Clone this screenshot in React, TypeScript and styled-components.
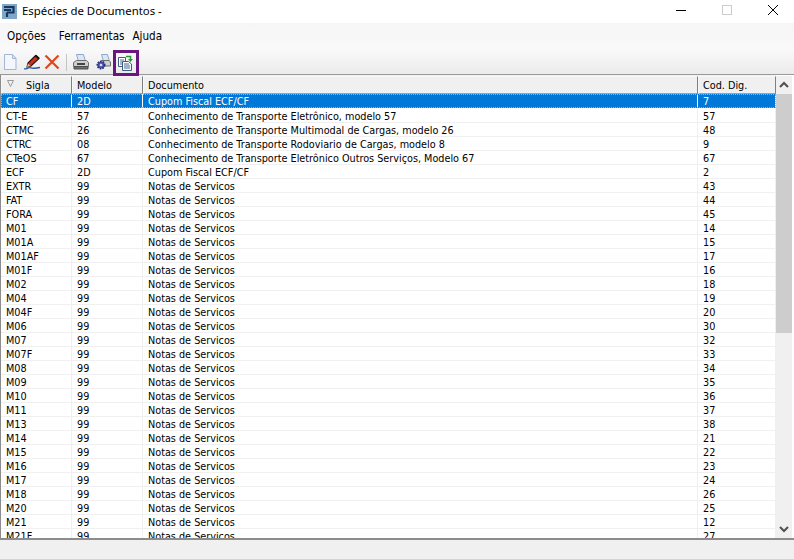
import React from "react";
import styled, { createGlobalStyle } from "styled-components";

const Global = createGlobalStyle`
  html, body { margin: 0; padding: 0; background: #fff; overflow: hidden; }
  * { box-sizing: border-box; }
`;

const Windowed = styled.div`
  width: 794px; height: 559px; display: flex; flex-direction: column; overflow: hidden;
  font-family: "DejaVu Sans Condensed", "DejaVu Sans", sans-serif; font-size: 10.75px; color: #000; background: #fff;
`;
const TitleBar = styled.div`
  height: 23px; flex: none; display: flex; align-items: center; background: #fff; padding-left: 2px;
`;
const AppLogo = styled.svg`width: 15px; height: 15px; flex: none;`;
const TitleText = styled.div`
  margin: -2px 0 0 5px; font-family: "Noto Sans", sans-serif; font-size: 11.4px; flex: 1;
`;
const WinButton = styled.svg<{ $mr?: number }>`width: 46px; height: 23px; flex: none; margin-right: ${p => p.$mr ?? 0}px;`;
const MenuBar = styled.div`
  height: 27px; flex: none; display: flex; align-items: center; padding: 0 0 2px 7px;
  background: linear-gradient(#f6f6f6, #f9f9f9); font-size: 11.6px;
`;
const MenuItem = styled.span<{ $ml?: number }>`margin-left: ${p => p.$ml ?? 0}px;`;
const ToolBar = styled.div`
  height: 25px; flex: none; display: flex; align-items: flex-start; padding-left: 4px;
  background: linear-gradient(#f9f9f9, #ebebeb); border-bottom: 1px solid #9a9a9a;
`;
const ToolIcon = styled.svg<{ $ml?: number }>`
  width: 16px; height: 16px; flex: none; margin-top: 4px; margin-left: ${p => p.$ml ?? 0}px;
`;
const Sep = styled.div`width: 1px; height: 17px; background: #c4c4c4; margin: 4px 0 0 6px;`;
const Highlight = styled.div`
  width: 26px; height: 26px; flex: none; border: 3px solid #6b1580; margin-left: 2px;
  display: flex; align-items: center; justify-content: center; position: relative; z-index: 1;
`;
const HiIcon = styled.svg`width: 16px; height: 16px;`;
const GridArea = styled.div`
  flex: 1; min-height: 0; display: flex; overflow: hidden; border-left: 1px solid #8c8c8c;
`;
const Table = styled.div`flex: none; width: 775px; overflow: hidden;`;
const Columns = "71px 71px 555px 78px";
const HeaderRow = styled.div`
  display: grid; grid-template-columns: ${Columns}; height: 19px; background: #f0f0f0; padding-top: 1px;
`;
const HeaderCell = styled.div<{ $pl?: number }>`
  display: flex; align-items: center; padding: 2px 0 0 ${p => p.$pl ?? 4}px;
  border: 1px solid; border-color: #f8f8f8 #7f7f7f #a0a0a0 #f8f8f8; line-height: 14px; position: relative;
`;
const SortMark = styled.svg`position: absolute; left: 5px; top: 3px; width: 7px; height: 7px;`;
const Row = styled.div<{ $sel?: boolean }>`
  display: grid; grid-template-columns: ${Columns}; height: 14px; line-height: 13px;
  margin-bottom: ${p => (p.$sel ? 1 : 0)}px;
  background: ${p => (p.$sel ? "#0078d7" : "#fff")}; color: ${p => (p.$sel ? "#fff" : "#000")};
  ${p => (p.$sel ? "outline: 1px dotted #e8a040; outline-offset: -1px;" : "")}
`;
const Cell = styled.div<{ $sel?: boolean }>`
  padding: 1px 0 0 5px; white-space: nowrap; overflow: hidden;
  border-right: 1px solid ${p => (p.$sel ? "#fff" : "#f0f0f0")};
  border-bottom: 1px solid ${p => (p.$sel ? "transparent" : "#f0f0f0")};
`;
const ScrollBar = styled.div`
  width: 16px; flex: none; background: #f0f0f0; display: flex; flex-direction: column; margin: 1px 0 0 0;
`;
const ScrollBtn = styled.svg`width: 16px; height: 18px; flex: none;`;
const Thumb = styled.div`height: 239px; flex: none; background: #cdcdcd;`;
const Spacer = styled.div`flex: 1;`;
const StatusBar = styled.div`
  height: 21px; flex: none; background: #f0f0f0; border-top: 2px solid #8c8c8c;
`;

const rows: [string, string, string, string][] = [
  ["CF", "2D", "Cupom Fiscal ECF/CF", "7"],
  ["CT-E", "57", "Conhecimento de Transporte Eletrônico, modelo 57", "57"],
  ["CTMC", "26", "Conhecimento de Transporte Multimodal de Cargas, modelo 26", "48"],
  ["CTRC", "08", "Conhecimento de Transporte Rodoviario de Cargas, modelo 8", "9"],
  ["CTeOS", "67", "Conhecimento de Transporte Eletrônico Outros Serviços, Modelo 67", "67"],
  ["ECF", "2D", "Cupom Fiscal ECF/CF", "2"],
  ...([
    ["EXTR", "43"], ["FAT", "44"], ["FORA", "45"], ["M01", "14"], ["M01A", "15"], ["M01AF", "17"],
    ["M01F", "16"], ["M02", "18"], ["M04", "19"], ["M04F", "20"], ["M06", "30"], ["M07", "32"],
    ["M07F", "33"], ["M08", "34"], ["M09", "35"], ["M10", "36"], ["M11", "37"], ["M13", "38"],
    ["M14", "21"], ["M15", "22"], ["M16", "23"], ["M17", "24"], ["M18", "26"], ["M20", "25"],
    ["M21", "12"], ["M21F", "27"],
  ].map(([a, b]) => [a, "99", "Notas de Servicos", b] as [string, string, string, string])),
];

export default function App() {
  return (
    <Windowed>
      <Global />
      <TitleBar>
        <AppLogo viewBox="0 0 15 15">
          <rect width="15" height="15" fill="#7fa7c9" />
          <path d="M2 3h9.5v5.5H5M2 6h7M5 8.5V13" fill="none" stroke="#17375e" strokeWidth="2.2" />
        </AppLogo>
        <TitleText>Espécies de Documentos -</TitleText>
        <WinButton viewBox="0 0 46 23"><path d="M18 10.5h10" stroke="#000" /></WinButton>
        <WinButton viewBox="0 0 46 23"><rect x="18.5" y="5.5" width="9" height="9" fill="none" stroke="#ccc" /></WinButton>
        <WinButton viewBox="0 0 46 23" $mr={-2}><path d="M18 5l10 10M28 5L18 15" stroke="#000" fill="none" /></WinButton>
      </TitleBar>
      <MenuBar>
        <MenuItem>Opções</MenuItem>
        <MenuItem $ml={13}>Ferramentas</MenuItem>
        <MenuItem $ml={8}>Ajuda</MenuItem>
      </MenuBar>
      <ToolBar>
        <ToolIcon viewBox="0 0 16 16">
          <path d="M.5.5h8l3.5 3.5v11.5H.5z" fill="#f3f6fc" stroke="#a3b6d4" />
          <path d="M8.5.8v3.7H12" fill="#d5dfef" stroke="#a3b6d4" />
        </ToolIcon>
        <ToolIcon viewBox="0 0 16 16" $ml={4}>
          <path d="M4 9L11.5 1.5l3.5 3L7 12l-4 1z" fill="#c9301f" stroke="#2a0f0c" strokeWidth="1.1" />
          <path d="M11.5 1.5l3.5 3" stroke="#111" strokeWidth="2" />
          <path d="M3 13l1-3.5 2.5 2.5z" fill="#e9b98a" />
          <path d="M0 14.5c2 1.5 4-1.4 6-.8s5 1 10-.2" fill="none" stroke="#2455a8" strokeWidth="1.4" />
        </ToolIcon>
        <ToolIcon viewBox="0 0 16 16" $ml={4}>
          <path d="M1.5 1.5l13 13M14.5 1.5l-13 13" stroke="#e2451c" strokeWidth="2.2" fill="none" />
        </ToolIcon>
        <Sep />
        <ToolIcon viewBox="0 0 16 16" $ml={6}>
          <path d="M3.5.5h7l2 7h-7z" fill="#dce7f5" stroke="#8fa8c8" />
          <path d="M.5 8.5l3-2h10l2 2v4H.5z" fill="#cfcfcf" stroke="#6e6e6e" />
          <path d="M1 12.5h14v2.5H1z" fill="#6f6f6f" stroke="#4c4c4c" />
          <path d="M4 10h8" stroke="#222" strokeWidth="1.6" />
        </ToolIcon>
        <ToolIcon viewBox="0 0 16 16" $ml={6}>
          <path d="M6.5.5h6l2 7h-6z" fill="#dce7f5" stroke="#8fa8c8" />
          <path d="M5 8l2-1.5h7L15.5 8v4H7z" fill="#cfcfcf" stroke="#6e6e6e" />
          <circle cx="6" cy="11" r="3.6" fill="#4a55b5" stroke="#2a2f78" strokeWidth="1.8" strokeDasharray="1.6 1" />
          <circle cx="6" cy="11" r="1.3" fill="#d8dcf5" />
        </ToolIcon>
        <Highlight>
          <HiIcon viewBox="0 0 16 16">
            <path d="M.5 2.5h7v9h-7z" fill="#fff" stroke="#3f5c7e" />
            <path d="M4.5 6.5h6l3 2.5v6.5h-9z" fill="#f4f7fc" stroke="#3f5c7e" />
            <path d="M2 5h4M2 7h2M2 9h2M6 9h5M6 11h6M6 13h6" stroke="#4f6d91" />
            <path d="M8 1.5h4.5v3" fill="none" stroke="#1f9d2c" strokeWidth="1.5" />
            <path d="M10 4h5l-2.5 3z" fill="#1f9d2c" />
          </HiIcon>
        </Highlight>
      </ToolBar>
      <GridArea>
        <Table>
          <HeaderRow>
            <HeaderCell $pl={24}>
              <SortMark viewBox="0 0 7 7"><path d="M.5.5h6L3.5 6.5z" fill="none" stroke="#9a9a9a" /></SortMark>
              Sigla
            </HeaderCell>
            <HeaderCell>Modelo</HeaderCell>
            <HeaderCell>Documento</HeaderCell>
            <HeaderCell>Cod. Dig.</HeaderCell>
          </HeaderRow>
          {rows.map((r, i) => (
            <Row key={r[0]} $sel={i === 0}>
              {r.map((c, j) => <Cell key={j} $sel={i === 0}>{c}</Cell>)}
            </Row>
          ))}
        </Table>
        <ScrollBar>
          <ScrollBtn viewBox="0 0 16 18"><path d="M4 11l4-4 4 4" fill="none" stroke="#505050" strokeWidth="2" /></ScrollBtn>
          <Thumb />
          <Spacer />
          <ScrollBtn viewBox="0 0 16 18"><path d="M4 7l4 4 4-4" fill="none" stroke="#505050" strokeWidth="2" /></ScrollBtn>
        </ScrollBar>
      </GridArea>
      <StatusBar />
    </Windowed>
  );
}
